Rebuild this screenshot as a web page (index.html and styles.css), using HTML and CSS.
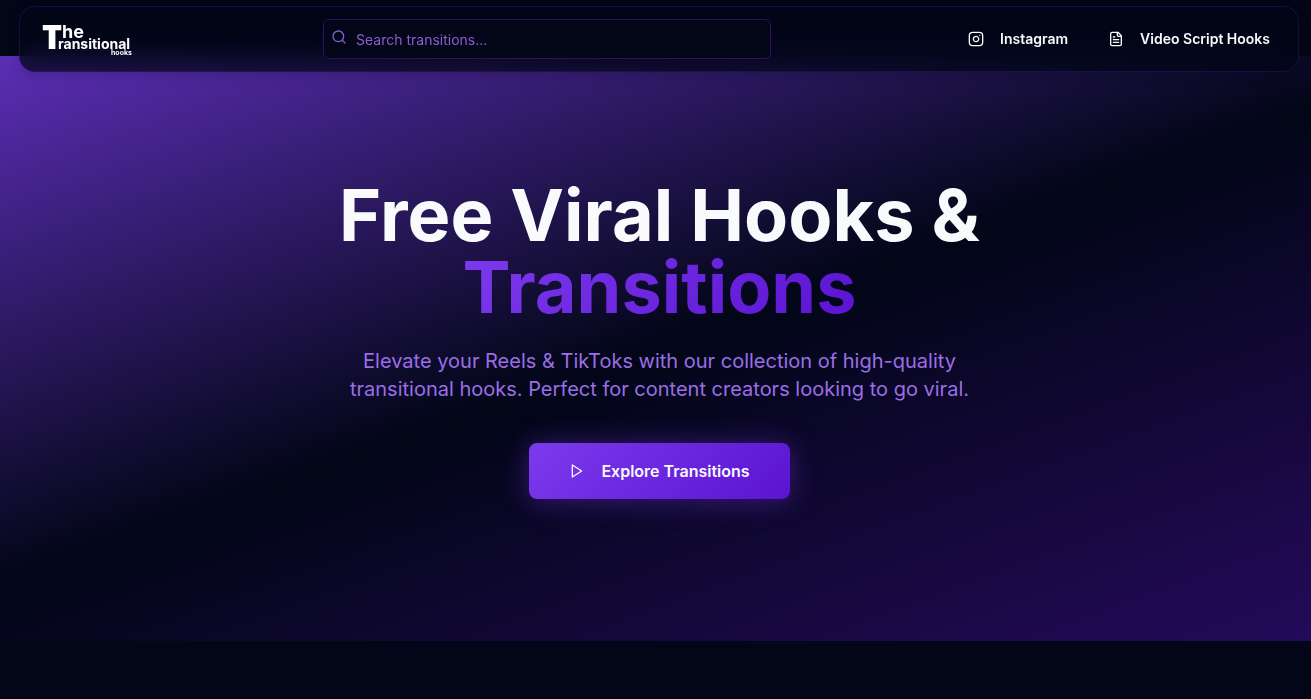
FILE: index.html
```html
<!DOCTYPE html>
<html lang="en">
<head>
<meta charset="utf-8">
<meta name="viewport" content="width=device-width, initial-scale=1">
<title>The Transitional Hooks</title>
<link rel="stylesheet" href="styles.css">
</head>
<body>
<header class="navbar">
  <a class="logo" href="#" aria-label="The Transitional Hooks">
    <svg width="84" height="34" viewBox="0 0 84 34">
      <text class="logo-t" x="0" y="27">T</text>
      <text class="logo-he" x="20" y="16">he</text>
      <text class="logo-rest" x="16" y="27">ransitional</text>
      <text class="logo-hooks" x="69" y="33">hooks</text>
    </svg>
  </a>
  <form class="search" role="search">
    <svg class="icon" viewBox="0 0 24 24"><circle cx="11" cy="11" r="8"/><path d="m21 21-4.3-4.3"/></svg>
    <input class="search-input" type="search" aria-label="Search transitions" placeholder="Search transitions...">
  </form>
  <nav class="links">
    <a class="link" href="#">
      <svg class="icon" viewBox="0 0 24 24"><rect x="2" y="2" width="20" height="20" rx="5"/><path d="M16 11.37A4 4 0 1 1 12.63 8 4 4 0 0 1 16 11.37z"/><path d="M17.5 6.5h.01"/></svg>
      Instagram
    </a>
    <a class="link" href="#">
      <svg class="icon" viewBox="0 0 24 24"><path d="M15 2H6a2 2 0 0 0-2 2v16a2 2 0 0 0 2 2h12a2 2 0 0 0 2-2V7Z"/><path d="M14 2v4a2 2 0 0 0 2 2h4M10 9H8M16 13H8M16 17H8"/></svg>
      Video Script Hooks
    </a>
  </nav>
</header>
<main class="hero">
  <h1 class="title">Free Viral Hooks &amp; <span class="accent">Transitions</span></h1>
  <p class="lead">Elevate your Reels &amp; TikToks with our collection of high-quality transitional hooks. Perfect for content creators looking to go viral.</p>
  <button class="cta" type="button">
    <svg class="icon" viewBox="0 0 24 24"><path d="m5 3 14 9-14 9z"/></svg>
    Explore Transitions
  </button>
</main>
</body>
</html>
```
FILE: styles.css
```css
* {
  box-sizing: border-box;
}

body {
  margin: 0;
  min-height: 100vh;
  background: #020617;
  color: #f8fafc;
  font-family: Inter, "Liberation Sans", sans-serif;
}

.icon {
  width: 16px;
  height: 16px;
  flex: none;
  fill: none;
  stroke: currentColor;
  stroke-width: 2;
  stroke-linecap: round;
  stroke-linejoin: round;
}

.navbar {
  position: sticky;
  top: 6px;
  z-index: 1;
  display: flex;
  justify-content: space-between;
  align-items: center;
  gap: 32px;
  margin: 6px 12px -16px 19px;
  padding: 12px 28px 12px 22px;
  border: 1px solid rgba(91, 33, 182, 0.25);
  border-radius: 16px;
  background: rgba(2, 6, 23, 0.7);
  backdrop-filter: blur(12px);
  box-shadow: 0 4px 12px rgba(2, 6, 23, 0.15);
}

.logo {
  display: flex;
}

.logo svg {
  overflow: visible;
  fill: #ffffff;
}

.logo-t {
  font-family: "Open Sans", sans-serif;
  font-size: 34px;
  font-weight: 800;
}

.logo-he {
  font-size: 18px;
  font-weight: 700;
}

.logo-rest {
  font-size: 14px;
  font-weight: 700;
}

.logo-hooks {
  font-size: 7px;
  font-weight: 700;
}

.search {
  display: flex;
  flex: 0 1 448px;
  align-items: flex-start;
  gap: 9px;
  height: 40px;
  padding: 0 7px;
  border: 1px solid #2e1065;
  border-radius: 6px;
  background: #020617;
  color: #8b5cd6;
}

.search .icon {
  margin-top: 9px;
}

.search-input {
  flex: 1;
  min-width: 0;
  height: 38px;
  padding: 0;
  border: 0;
  outline: 0;
  background: none;
  color: inherit;
  font: 400 14px/20px Inter, "Liberation Sans", sans-serif;
}

.search-input::placeholder {
  color: inherit;
  opacity: 1;
}

.links {
  display: flex;
  gap: 40px;
}

.link {
  display: flex;
  align-items: center;
  gap: 16px;
  color: #f8fafc;
  font-size: 14px;
  font-weight: 600;
  line-height: 20px;
  white-space: nowrap;
  text-decoration: none;
}

.hero {
  display: flex;
  flex-direction: column;
  align-items: center;
  padding: 123px 16px 142px 24px;
  background: linear-gradient(160deg, #5b2eb5 0%, #020617 50%, #240a5a 100%);
  text-align: center;
}

.title {
  max-width: 896px;
  margin: 0;
  font-size: 72px;
  font-weight: 700;
  line-height: 72px;
}

.accent {
  display: block;
  width: fit-content;
  margin: 0 auto;
  background: linear-gradient(135deg, #7c3aed, #5b13d1);
  background-clip: text;
  color: transparent;
}

.lead {
  max-width: 672px;
  margin: 24px 0 0;
  color: #9b6ee6;
  font-size: 20px;
  line-height: 28px;
}

.cta {
  display: flex;
  align-items: center;
  gap: 16px;
  margin-top: 40px;
  padding: 16px 40px;
  border: 0;
  border-radius: 8px;
  background: linear-gradient(135deg, #7c3aed, #5b13d1);
  box-shadow: 0 2px 28px rgba(124, 58, 237, 0.4);
  color: #f8fafc;
  font: 600 16px/24px Inter, "Liberation Sans", sans-serif;
}
```
